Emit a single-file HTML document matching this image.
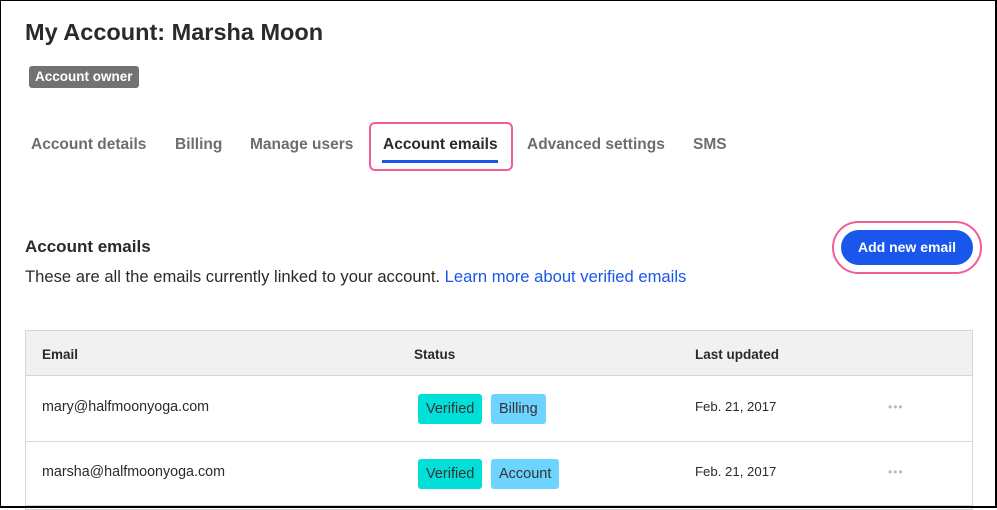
<!DOCTYPE html>
<html><head><style>
*{margin:0;padding:0;box-sizing:border-box}
body{width:997px;height:508px;overflow:hidden;background:#fff;font-family:"Liberation Sans",sans-serif;color:#2a2a2a;position:relative}
.frame{position:absolute;left:0;top:0;width:997px;height:508px;border:1px solid #000;border-right-width:2px;border-bottom-width:2px}
.a{position:absolute;white-space:nowrap}
.tab{position:absolute;top:136px;font-size:15.5px;font-weight:bold;color:#6d6d6d}
.badge{position:absolute;height:30px;border-radius:3px;font-size:14.5px;line-height:30px;padding:0 8px;color:#333}
.g{background:#00e0d8}.l{background:#6dd3ff}
.td{position:absolute;font-size:14px;color:#2a2a2a}
.th{position:absolute;top:347px;font-size:13.5px;font-weight:bold;color:#2a2a2a}
.dots{position:absolute;font-size:12px;color:#bbb;letter-spacing:1px}
</style></head><body>
<div class="a" style="left:25px;top:19px;font-size:23.5px;font-weight:bold;color:#2a2a2a">My Account: Marsha Moon</div>
<div class="a" style="left:29px;top:66px;height:22px;padding:0 6px;background:#727272;border-radius:3px;color:#fff;font-size:13.5px;font-weight:bold;line-height:22px">Account owner</div>
<div class="tab" style="left:31px">Account details</div>
<div class="tab" style="left:175px">Billing</div>
<div class="tab" style="left:250px">Manage users</div>
<div class="a" style="left:369px;top:122px;width:144px;height:49px;border:2.5px solid #f45b9a;border-radius:6px"></div>
<div class="tab" style="left:383px;color:#2a2a2a">Account emails</div>
<div class="a" style="left:382px;top:160px;width:116px;height:3px;background:#1856ec"></div>
<div class="tab" style="left:527px">Advanced settings</div>
<div class="tab" style="left:693px">SMS</div>
<div class="a" style="left:25px;top:237px;font-size:17px;font-weight:bold;color:#2a2a2a">Account emails</div>
<div class="a" style="left:25px;top:267px;font-size:16.6px;color:#2a2a2a">These are all the emails currently linked to your account. <span style="color:#1856ec">Learn more about verified emails</span></div>
<div class="a" style="left:832px;top:221px;width:150px;height:53px;border:2.5px solid #f45b9a;border-radius:27px"></div>
<div class="a" style="left:841px;top:230px;width:132px;height:35px;background:#1856ec;border-radius:18px;color:#fff;font-size:14px;font-weight:bold;text-align:center;line-height:35px">Add new email</div>
<div class="a" style="left:25px;top:330px;width:948px;height:180px;border:1px solid #d6d6d6"></div>
<div class="a" style="left:26px;top:331px;width:946px;height:45px;background:#f1f1f1;border-bottom:1px solid #d6d6d6"></div>
<div class="a" style="left:26px;top:441px;width:946px;height:1px;background:#d6d6d6"></div>
<div class="a" style="left:26px;top:505px;width:946px;height:1px;background:#d6d6d6"></div>
<div class="th" style="left:42px">Email</div>
<div class="th" style="left:414px">Status</div>
<div class="th" style="left:695px">Last updated</div>
<div class="td" style="left:42px;top:399px;font-size:14.3px">mary@halfmoonyoga.com</div>
<div class="badge g" style="left:418px;top:394px">Verified</div>
<div class="badge l" style="left:491px;top:394px">Billing</div>
<div class="td" style="left:695px;top:399px;font-size:13.2px">Feb. 21, 2017</div>
<div class="dots" style="left:888px;top:400px">•••</div>
<div class="td" style="left:42px;top:464px;font-size:14.3px">marsha@halfmoonyoga.com</div>
<div class="badge g" style="left:418px;top:459px">Verified</div>
<div class="badge l" style="left:491px;top:459px">Account</div>
<div class="td" style="left:695px;top:464px;font-size:13.2px">Feb. 21, 2017</div>
<div class="dots" style="left:888px;top:465px">•••</div>
<div class="frame"></div>
</body></html>
